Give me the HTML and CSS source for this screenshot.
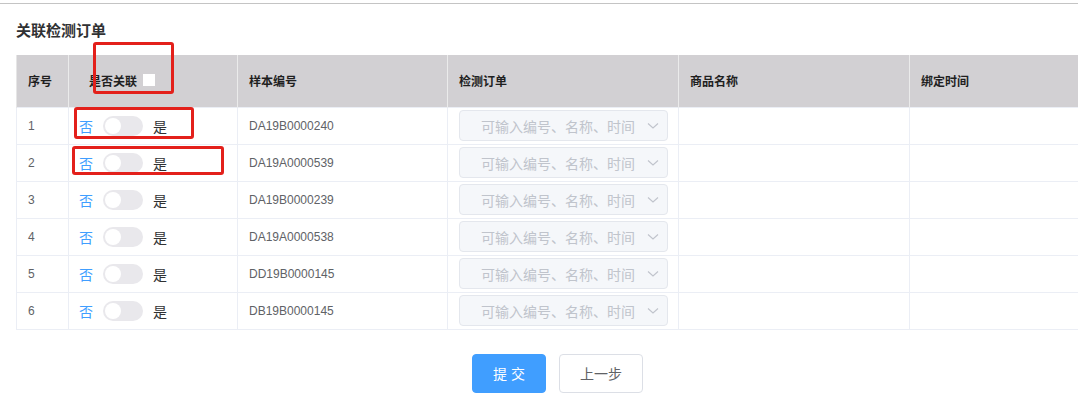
FILE: index.html
```html
<!DOCTYPE html>
<html lang="zh">
<head>
<meta charset="utf-8">
<link rel="stylesheet" href="styles.css">
</head>
<body>
<div class="page">
  <h2 class="title">关联检测订单</h2>
  <div class="table-wrap">
    <table class="grid">
      <colgroup>
        <col class="c-idx"><col class="c-link"><col class="c-sample"><col class="c-order"><col class="c-goods"><col class="c-time">
      </colgroup>
      <thead>
        <tr>
          <th>序号</th>
          <th class="th-link">是否关联<span class="hcheck"></span></th>
          <th>样本编号</th>
          <th>检测订单</th>
          <th>商品名称</th>
          <th>绑定时间</th>
        </tr>
      </thead>
      <tbody>
        <tr><td>1</td><td><div class="sw"><span class="off">否</span><span class="track"><span class="knob"></span></span><span class="on">是</span></div></td><td>DA19B0000240</td><td><div class="sel"><span>可输入编号、名称、时间</span><svg viewBox="0 0 12 8" class="arrow"><path d="M1 1.5 L6 6 L11 1.5" fill="none" stroke="currentColor" stroke-width="1.1"/></svg></div></td><td></td><td></td></tr>
        <tr><td>2</td><td><div class="sw"><span class="off">否</span><span class="track"><span class="knob"></span></span><span class="on">是</span></div></td><td>DA19A0000539</td><td><div class="sel"><span>可输入编号、名称、时间</span><svg viewBox="0 0 12 8" class="arrow"><path d="M1 1.5 L6 6 L11 1.5" fill="none" stroke="currentColor" stroke-width="1.1"/></svg></div></td><td></td><td></td></tr>
        <tr><td>3</td><td><div class="sw"><span class="off">否</span><span class="track"><span class="knob"></span></span><span class="on">是</span></div></td><td>DA19B0000239</td><td><div class="sel"><span>可输入编号、名称、时间</span><svg viewBox="0 0 12 8" class="arrow"><path d="M1 1.5 L6 6 L11 1.5" fill="none" stroke="currentColor" stroke-width="1.1"/></svg></div></td><td></td><td></td></tr>
        <tr><td>4</td><td><div class="sw"><span class="off">否</span><span class="track"><span class="knob"></span></span><span class="on">是</span></div></td><td>DA19A0000538</td><td><div class="sel"><span>可输入编号、名称、时间</span><svg viewBox="0 0 12 8" class="arrow"><path d="M1 1.5 L6 6 L11 1.5" fill="none" stroke="currentColor" stroke-width="1.1"/></svg></div></td><td></td><td></td></tr>
        <tr><td>5</td><td><div class="sw"><span class="off">否</span><span class="track"><span class="knob"></span></span><span class="on">是</span></div></td><td>DD19B0000145</td><td><div class="sel"><span>可输入编号、名称、时间</span><svg viewBox="0 0 12 8" class="arrow"><path d="M1 1.5 L6 6 L11 1.5" fill="none" stroke="currentColor" stroke-width="1.1"/></svg></div></td><td></td><td></td></tr>
        <tr><td>6</td><td><div class="sw"><span class="off">否</span><span class="track"><span class="knob"></span></span><span class="on">是</span></div></td><td>DB19B0000145</td><td><div class="sel"><span>可输入编号、名称、时间</span><svg viewBox="0 0 12 8" class="arrow"><path d="M1 1.5 L6 6 L11 1.5" fill="none" stroke="currentColor" stroke-width="1.1"/></svg></div></td><td></td><td></td></tr>
      </tbody>
    </table>
  </div>
  <div class="actions">
    <button class="btn primary">提 交</button>
    <button class="btn plain">上一步</button>
  </div>
  <div class="mark m1"></div>
  <div class="mark m2"></div>
  <div class="mark m3"></div>
</div>
</body>
</html>
```

FILE: styles.css
```css
html, body {
  margin: 0;
  padding: 0;
  overflow: hidden;
  background: #ffffff;
}
body {
  width: 1078px;
  height: 415px;
  font-family: "Liberation Sans", "Noto Sans CJK SC", sans-serif;
  color: #606266;
}
.page {
  position: relative;
  margin-top: 3px;
  border-top: 1px solid #c4c4c4;
  padding: 0 0 0 16px;
  height: 411px;
}
.title {
  margin: 0;
  padding-top: 16px;
  box-sizing: border-box;
  height: 51px;
  font-size: 15px;
  line-height: 22px;
  font-weight: bold;
  color: #303133;
}
.table-wrap {
  width: 1090px;
}
.grid {
  border-collapse: collapse;
  table-layout: fixed;
  width: 1090px;
  font-size: 12px;
}
.c-idx { width: 52px; }
.c-link { width: 169px; }
.c-sample { width: 210px; }
.c-order { width: 231px; }
.c-goods { width: 231px; }
.c-time { width: 197px; }
.grid th {
  background: #d2d0d3;
  color: #1f1f1f;
  font-weight: bold;
  text-align: left;
  height: 52px;
  padding: 0 0 0 11px;
  border-left: 1px solid #ebebeb;
  box-sizing: border-box;
}
.grid th:first-child { border-left: 1px solid #e6e6e6; }
.grid th.th-link { padding-left: 20px; }
.hcheck {
  display: inline-block;
  width: 12px;
  height: 12px;
  background: #ffffff;
  margin-left: 6px;
  vertical-align: 0px;
}
.grid td {
  height: 37px;
  padding: 0 0 0 11px;
  border: 1px solid #ebeef5;
  box-sizing: border-box;
  color: #606266;
}
.sw {
  display: flex;
  align-items: center;
  font-size: 14px;
  margin-left: -1px;
}
.off { color: #409eff; }
.on { color: #303133; }
.track {
  position: relative;
  width: 40px;
  height: 20px;
  border-radius: 10px;
  background: #e9e8ec;
  margin: 0 10px;
}
.knob {
  position: absolute;
  left: 2px;
  top: 2px;
  width: 16px;
  height: 16px;
  border-radius: 50%;
  background: #ffffff;
}
.sel {
  display: flex;
  align-items: center;
  justify-content: space-between;
  width: 209px;
  height: 31px;
  box-sizing: border-box;
  border: 1px solid #e4e7ed;
  border-radius: 4px;
  background: #f5f7fa;
  padding: 0 8px 0 21px;
  font-size: 14px;
  color: #c0c4cc;
}
.arrow {
  width: 12px;
  height: 8px;
  color: #c0c4cc;
}
.actions {
  display: flex;
  gap: 13px;
  padding: 24px 0 0 456px;
}
.btn {
  height: 39px;
  border-radius: 4px;
  font-size: 14px;
  font-family: "Liberation Sans", "Noto Sans CJK SC", sans-serif;
  cursor: pointer;
}
.btn.primary {
  width: 74px;
  background: #409eff;
  border: 1px solid #409eff;
  color: #ffffff;
}
.btn.plain {
  width: 84px;
  background: #ffffff;
  border: 1px solid #dcdfe6;
  color: #606266;
}
.mark {
  position: absolute;
  border: 3px solid #e3201b;
  border-radius: 3px;
  box-sizing: border-box;
}
.m1 { left: 93px; top: 38px; width: 81px; height: 52px; }
.m2 { left: 74px; top: 103px; width: 120px; height: 32px; }
.m3 { left: 72px; top: 142px; width: 152px; height: 29px; }
```
